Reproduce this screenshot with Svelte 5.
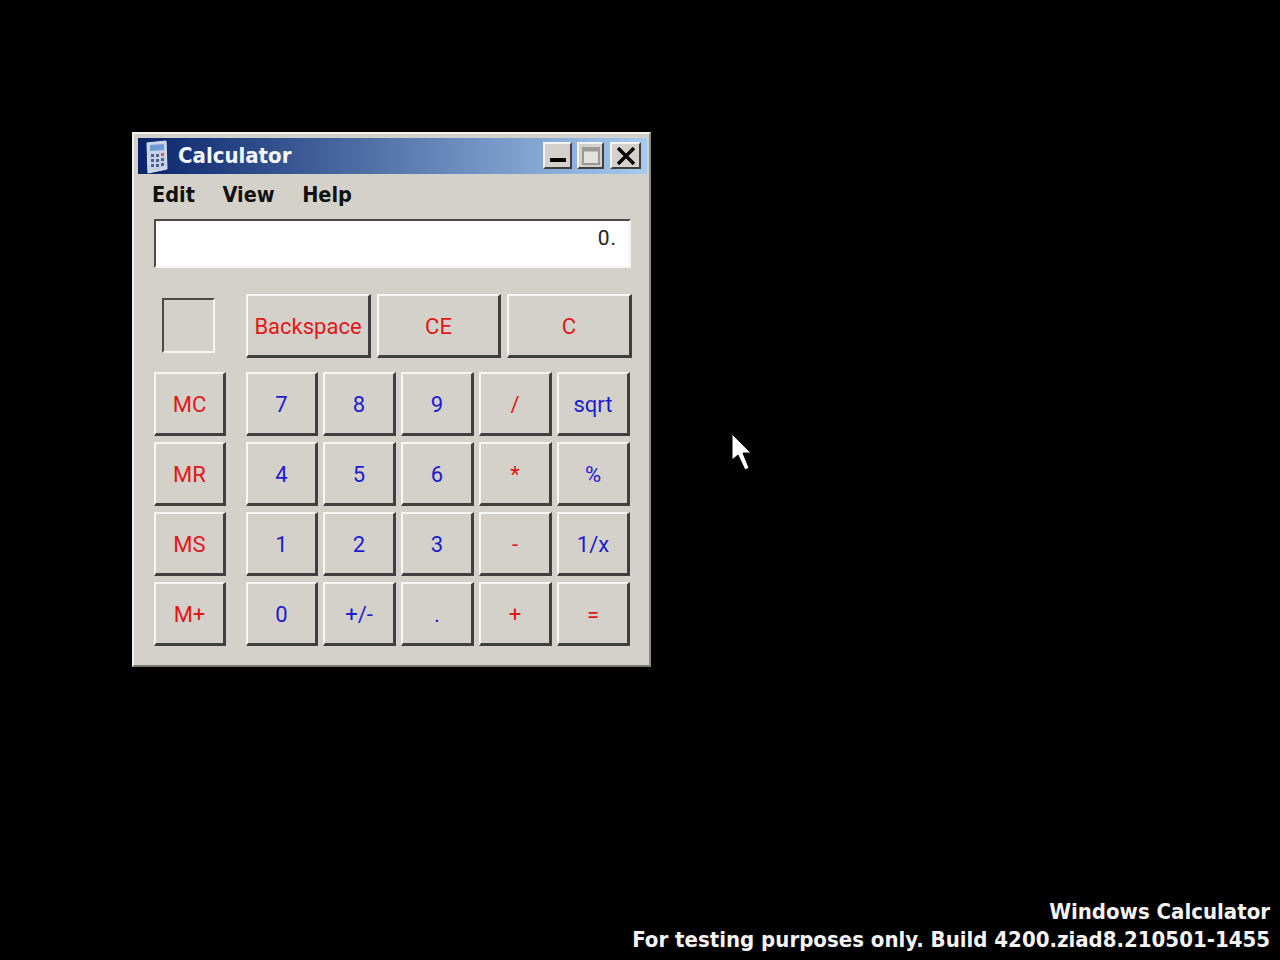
<script lang="ts">
  const topKeys = ['Backspace', 'CE', 'C'];
  const memoryKeys = ['MC', 'MR', 'MS', 'M+'];
  const keys = [
    ['7', 'blue'], ['8', 'blue'], ['9', 'blue'], ['/', 'red'], ['sqrt', 'blue'],
    ['4', 'blue'], ['5', 'blue'], ['6', 'blue'], ['*', 'red'], ['%', 'blue'],
    ['1', 'blue'], ['2', 'blue'], ['3', 'blue'], ['-', 'red'], ['1/x', 'blue'],
    ['0', 'blue'], ['+/-', 'blue'], ['.', 'blue'], ['+', 'red'], ['=', 'red']
  ];
</script>

<div class="desktop">
  <div class="window">
    <div class="titlebar">
      <svg class="app-icon" width="26" height="34" viewBox="0 0 26 34">
        <path d="M4 3 L23 1 L24 29 L5 33 Z" fill="#c6d2e8" stroke="#dfe6f2" />
        <path d="M7 5 L21 4 L21 10 L7 11 Z" fill="#6f9ad6" />
        <g fill="#4f618c">
          <rect x="8" y="14" width="3" height="3" /><rect x="13" y="14" width="3" height="3" />
          <rect x="8" y="19" width="3" height="3" /><rect x="13" y="19" width="3" height="3" />
          <rect x="18" y="18" width="3" height="3" />
          <rect x="8" y="24" width="3" height="3" /><rect x="13" y="24" width="3" height="3" />
          <rect x="18" y="23" width="3" height="3" />
        </g>
        <rect x="18" y="13" width="3" height="3" fill="#c26a5e" />
      </svg>
      <span class="title">Calculator</span>
      <div class="controls">
        <button class="ctl">
          <svg width="16" height="14" viewBox="0 0 16 14"><rect x="0" y="9" width="16" height="4" fill="#000" /></svg>
        </button>
        <button class="ctl">
          <svg width="20" height="20" viewBox="0 0 20 20"><rect x="2" y="2" width="16" height="16" fill="#e4e2dc" stroke="#9a9a94" stroke-width="2" /><line x1="2" y1="4" x2="18" y2="4" stroke="#9a9a94" stroke-width="3" /></svg>
        </button>
        <button class="ctl">
          <svg width="20" height="18" viewBox="0 0 20 18"><path d="M2 1 L18 17 M18 1 L2 17" stroke="#000" stroke-width="3.4" /></svg>
        </button>
      </div>
    </div>

    <div class="menu">
      <span>Edit</span>
      <span>View</span>
      <span>Help</span>
    </div>

    <div class="display"><span>0.</span></div>

    <div class="keypad">
      <div class="memory">
        <div class="indicator-cell"><div class="indicator"></div></div>
        {#each memoryKeys as key}
          <button class="key red">{key}</button>
        {/each}
      </div>
      <div class="main">
        <div class="top-row">
          {#each topKeys as key}
            <button class="key red">{key}</button>
          {/each}
        </div>
        <div class="grid">
          {#each keys as [label, color]}
            <button class="key {color}">{label}</button>
          {/each}
        </div>
      </div>
    </div>
  </div>

  <svg class="cursor" width="24" height="40" viewBox="0 0 24 40">
    <path d="M1 1 L1 27 L7 22 L14 37 L18 35 L12 20 L20 20 Z" fill="#fff" stroke="#000" stroke-width="1" />
  </svg>

  <div class="watermark">
    <div>Windows Calculator</div>
    <div>For testing purposes only. Build 4200.ziad8.210501-1455</div>
  </div>
</div>

<style>
  :global(body) {
    margin: 0;
    background: #000;
  }

  .desktop {
    position: relative;
    width: 1280px;
    height: 960px;
    background: #000;
    overflow: hidden;
  }

  .window {
    position: absolute;
    left: 132px;
    top: 132px;
    width: 519px;
    height: 535px;
    box-sizing: border-box;
    padding: 4px 2px 0 4px;
    background: #d4d1ca;
    border-top: 2px solid #f2f0ec;
    border-left: 2px solid #f2f0ec;
    border-right: 2px solid #8a8a84;
    border-bottom: 2px solid #77776f;
  }

  .titlebar {
    height: 36px;
    display: flex;
    align-items: center;
    padding: 0 6px 0 5px;
    background: linear-gradient(90deg, #0a246a 0%, #a6caf0 100%);
  }

  .app-icon {
    flex: none;
    margin-top: 2px;
  }

  .title {
    margin-left: 9px;
    margin-top: -2px;
    font-family: "DejaVu Sans", sans-serif;
    font-stretch: condensed;
    font-weight: 700;
    font-size: 22px;
    color: #f4f6fa;
  }

  .controls {
    margin-left: auto;
    display: flex;
    gap: 5px;
    margin-top: -1px;
  }

  .ctl {
    width: 29px;
    height: 27px;
    padding: 0;
    display: flex;
    align-items: center;
    justify-content: center;
    background: #d4d1ca;
    border: 2px solid;
    border-color: #f4f4f0 #404040 #404040 #f4f4f0;
  }

  .ctl:nth-child(2) {
    width: 27px;
  }

  .ctl:nth-child(3) {
    width: 31px;
    margin-left: 1px;
  }

  .menu {
    height: 40px;
    display: flex;
    align-items: center;
    gap: 27.5px;
    padding-left: 14px;
    font-family: "DejaVu Sans", sans-serif;
    font-stretch: condensed;
    font-weight: 700;
    font-size: 21.5px;
    color: #111;
  }

  .display {
    width: 477px;
    height: 49px;
    margin: 5px 0 0 16px;
    box-sizing: border-box;
    padding: 0 12px 12px 0;
    display: flex;
    align-items: center;
    justify-content: flex-end;
    background: #fff;
    border: 2px solid;
    border-color: #4a4a46 #f4f4f0 #f4f4f0 #4a4a46;
    font-family: "Roboto", sans-serif;
    font-size: 21px;
    letter-spacing: 1px;
    color: #222;
  }

  .keypad {
    display: flex;
    gap: 20px;
    margin: 26px 0 0 16px;
  }

  .memory {
    width: 72px;
    display: flex;
    flex-direction: column;
    gap: 6px;
  }

  .memory .key {
    height: 64px;
  }

  .indicator-cell {
    height: 72px;
    padding: 4px 0 0 8px;
    box-sizing: border-box;
    display: flex;
  }

  .indicator {
    width: 53px;
    height: 55px;
    box-sizing: border-box;
    border: 2px solid;
    border-color: #4a4a46 #f4f4f0 #f4f4f0 #4a4a46;
  }

  .main {
    display: flex;
    flex-direction: column;
  }

  .top-row {
    display: grid;
    grid-template-columns: 125px 124px 125px;
    gap: 6px;
    height: 64px;
    margin-bottom: 14px;
  }

  .grid {
    display: grid;
    grid-template-columns: 72px repeat(4, 73px);
    grid-auto-rows: 64px;
    column-gap: 5px;
    row-gap: 6px;
  }

  .key {
    padding: 2px 0 0;
    box-sizing: border-box;
    background: #d4d1ca;
    border-style: solid;
    border-width: 2px 3px 3px 2px;
    border-color: #f6f6f2 #404040 #404040 #f6f6f2;
    font-family: "Roboto", sans-serif;
    font-size: 22px;
  }

  .red {
    color: #e01818;
  }

  .blue {
    color: #1c1cd0;
  }

  .cursor {
    position: absolute;
    left: 731px;
    top: 433px;
  }

  .watermark {
    position: absolute;
    right: 10px;
    bottom: 6px;
    text-align: right;
    font-family: "DejaVu Sans", sans-serif;
    font-stretch: condensed;
    font-weight: 700;
    font-size: 22px;
    line-height: 28px;
    color: #f4f4f4;
  }
</style>
